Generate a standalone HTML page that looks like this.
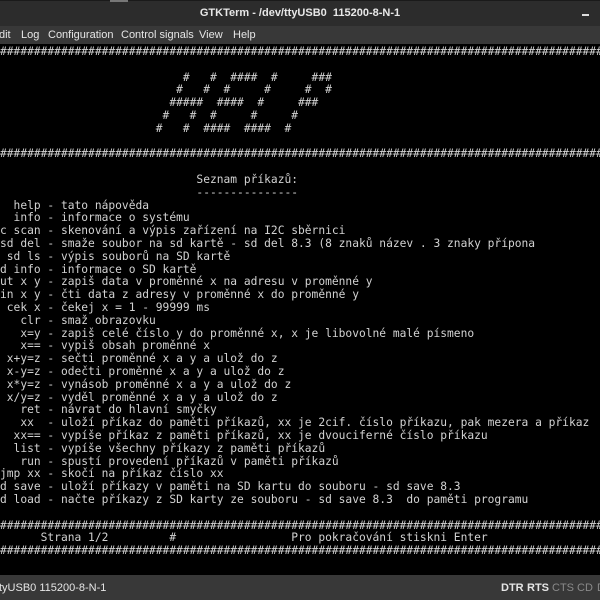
<!DOCTYPE html>
<html><head><meta charset="utf-8"><style>
html,body{margin:0;padding:0;width:600px;height:600px;overflow:hidden;background:#000;font-family:"Liberation Sans","DejaVu Sans",sans-serif;}
.title{position:absolute;left:0;top:0;width:600px;height:26px;background:#2c2c2c;color:#e8e8e8;font-size:11px;font-weight:bold;}
.title .t{position:absolute;left:0;width:600px;top:7px;text-align:center;}
.title .min{position:absolute;left:582px;top:14px;width:7px;height:2px;background:#ddd;}
.strip{position:absolute;left:0;top:0;width:600px;height:1px;background:#1a1a1a;}
.strip2{position:absolute;left:110px;top:0;width:18px;height:2px;background:#777;}
.menu{position:absolute;left:0;top:26px;width:600px;height:18px;background:#383838;color:#e6e6e6;font-size:11px;}
.menu span{position:absolute;top:3px;}
.term{position:absolute;left:0;top:44px;width:600px;height:531px;background:#000;overflow:hidden;}
pre{position:absolute;left:0;top:2.1px;margin:0;font-family:"DejaVu Sans Mono","Liberation Mono",monospace;font-size:11.25px;line-height:12.8px;color:#d2d2d2;white-space:pre;}
.status{position:absolute;left:0;top:575px;width:600px;height:25px;background:#383838;color:#e6e6e6;font-size:11px;}
.status span{position:absolute;top:7px;}
.dim{color:#8a8a8a;}
</style></head><body>
<div class="title"><div class="t">GTKTerm - /dev/ttyUSB0&nbsp; 115200-8-N-1</div><div class="min"></div></div>
<div class="strip"></div><div class="strip2"></div>
<div class="menu"><span style="left:-1px">dit</span><span style="left:21px">Log</span><span style="left:48px">Configuration</span><span style="left:121px">Control signals</span><span style="left:199px">View</span><span style="left:233px">Help</span></div>
<div class="term"><pre>##########################################################################################
 
                           #   #  ####  #     ###
                          #   #  #     #     #  #
                         #####  ####  #     ###
                        #   #  #     #     #
                       #   #  ####  ####  #
 
##########################################################################################
 
                             Seznam příkazů:
                             ---------------
  help - tato nápověda
  info - informace o systému
c scan - skenování a výpis zařízení na I2C sběrnici
sd del - smaže soubor na sd kartě - sd del 8.3 (8 znaků název . 3 znaky přípona
 sd ls - výpis souborů na SD kartě
d info - informace o SD kartě
ut x y - zapiš data v proměnné x na adresu v proměnné y
in x y - čti data z adresy v proměnné x do proměnné y
 cek x - čekej x = 1 - 99999 ms
   clr - smaž obrazovku
   x=y - zapiš celé číslo y do proměnné x, x je libovolné malé písmeno
   x== - vypiš obsah proměnné x
 x+y=z - sečti proměnné x a y a ulož do z
 x-y=z - odečti proměnné x a y a ulož do z
 x*y=z - vynásob proměnné x a y a ulož do z
 x/y=z - vyděl proměnné x a y a ulož do z
   ret - návrat do hlavní smyčky
   xx  - uloží příkaz do paměti příkazů, xx je 2cif. číslo příkazu, pak mezera a příkaz
  xx== - vypíše příkaz z paměti příkazů, xx je dvouciferné číslo příkazu
  list - vypíše všechny příkazy z paměti příkazů
   run - spustí provedení příkazů v paměti příkazů
jmp xx - skočí na příkaz číslo xx
d save - uloží příkazy v paměti na SD kartu do souboru - sd save 8.3
d load - načte příkazy z SD karty ze souboru - sd save 8.3  do paměti programu
 
##########################################################################################
      Strana 1/2         #                 Pro pokračování stiskni Enter
##########################################################################################</pre></div>
<div class="status"><span style="left:-1px">tyUSB0 115200-8-N-1</span><span style="left:501px;font-weight:bold">DTR</span><span style="left:527px;font-weight:bold">RTS</span><span class="dim" style="left:552px">CTS</span><span class="dim" style="left:577px">CD</span><span class="dim" style="left:597px">D</span></div>
</body></html>
